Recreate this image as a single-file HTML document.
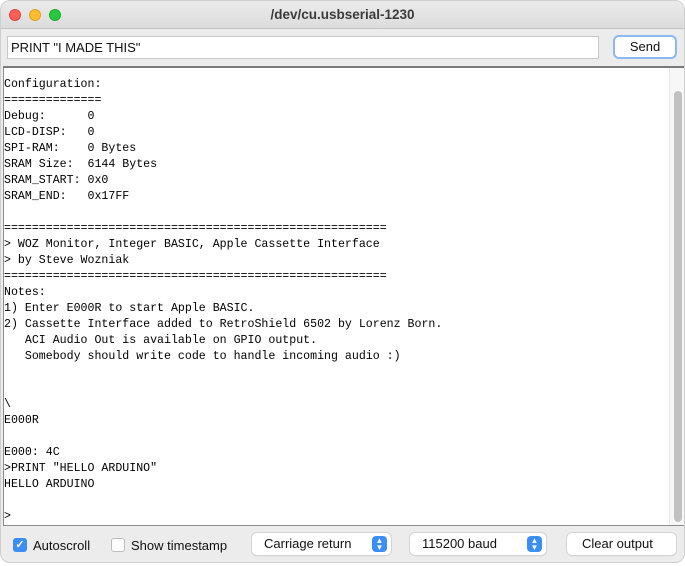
<!DOCTYPE html>
<html><head><style>
*{box-sizing:border-box;margin:0;padding:0}
body{width:685px;height:566px;background:#fff;position:relative;overflow:hidden;font-family:"Liberation Sans",sans-serif}
.win{position:absolute;left:0;top:0;width:685px;height:563px;background:#ececec;border-radius:10px;overflow:hidden;border:1px solid #cfcfcf}
.title{position:absolute;left:0;top:0;width:100%;height:28px;background:linear-gradient(#ebebeb,#dcdcdc);border-bottom:1px solid #c4c4c4;text-align:center;font-size:13.5px;font-weight:bold;color:#3b3b3b;line-height:28px}
.dot{position:absolute;top:8px;width:12px;height:12px;border-radius:50%}
.inp{position:absolute;left:6px;top:35px;width:592px;height:23px;background:#fff;border:1px solid #c8c8c8;font-size:13px;line-height:21px;padding-left:3px;color:#111}
.send{position:absolute;left:612px;top:34px;width:64px;height:24px;background:#fff;border:2px solid #8bb8f0;border-radius:6px;text-align:center;font-size:13px;line-height:20px;color:#111}
.ta{position:absolute;left:2px;top:65px;width:682px;height:460px;background:#fff;border:1px solid #8c8c8c;border-top:2px solid #7a7a7a}
pre{position:absolute;left:0px;top:9px;font-family:"Liberation Mono",monospace;font-size:11.6px;line-height:16px;color:#000}
.sb{position:absolute;right:0;top:0;width:15px;height:100%;background:#f7f7f7;border-left:1px solid #e8e8e8}
.th{position:absolute;left:4px;top:23px;width:8px;height:431px;background:#c1c1c1;border-radius:4px}
.bot{position:absolute;top:533px;font-size:13px;color:#111}
.cb{position:absolute;top:537px;width:14px;height:14px;border-radius:3px}
.pop{position:absolute;top:532px;height:22px;background:#fff;border-radius:5px;box-shadow:0 0 0 1px #d4d4d4,0 1px 1px #c8c8c8;font-size:13px;line-height:22px;color:#111;padding-left:12px}
.ar{position:absolute;right:4px;top:3px;width:15px;height:16px;background:#3b8ef5;border-radius:4px;color:#fff;font-size:8px;line-height:7px;text-align:center;padding-top:1px}
</style></head><body>
<div class="win">
<div class="title">/dev/cu.usbserial-1230</div>
<div class="dot" style="left:8px;background:#fe5f57;border:1px solid #e0443e"></div>
<div class="dot" style="left:28px;background:#febc2e;border:1px solid #dea123"></div>
<div class="dot" style="left:48px;background:#28c840;border:1px solid #1aab29"></div>
<div class="inp">PRINT "I MADE THIS"</div>
<div class="send">Send</div>
<div class="ta">
<pre>Configuration:
==============
Debug:      0
LCD-DISP:   0
SPI-RAM:    0 Bytes
SRAM Size:  6144 Bytes
SRAM_START: 0x0
SRAM_END:   0x17FF

=======================================================
&gt; WOZ Monitor, Integer BASIC, Apple Cassette Interface
&gt; by Steve Wozniak
=======================================================
Notes:
1) Enter E000R to start Apple BASIC.
2) Cassette Interface added to RetroShield 6502 by Lorenz Born.
   ACI Audio Out is available on GPIO output.
   Somebody should write code to handle incoming audio :)


\
E000R

E000: 4C
&gt;PRINT "HELLO ARDUINO"
HELLO ARDUINO

&gt;</pre>
<div class="sb"><div class="th"></div></div>
</div>
<div class="cb" style="left:12px;background:#3b8ef5;color:#fff;font-size:11px;line-height:14px;text-align:center;font-weight:bold">✓</div>
<div class="bot" style="left:32px;top:537px;line-height:16px">Autoscroll</div>
<div class="cb" style="left:110px;background:#fff;border:1px solid #bdbdbd"></div>
<div class="bot" style="left:130px;top:537px;line-height:16px">Show timestamp</div>
<div class="pop" style="left:251px;width:139px">Carriage return<div class="ar">▲<br>▼</div></div>
<div class="pop" style="left:409px;width:136px">115200 baud<div class="ar">▲<br>▼</div></div>
<div class="pop" style="left:566px;width:109px;padding-left:15px">Clear output</div>
</div>
</body></html>
